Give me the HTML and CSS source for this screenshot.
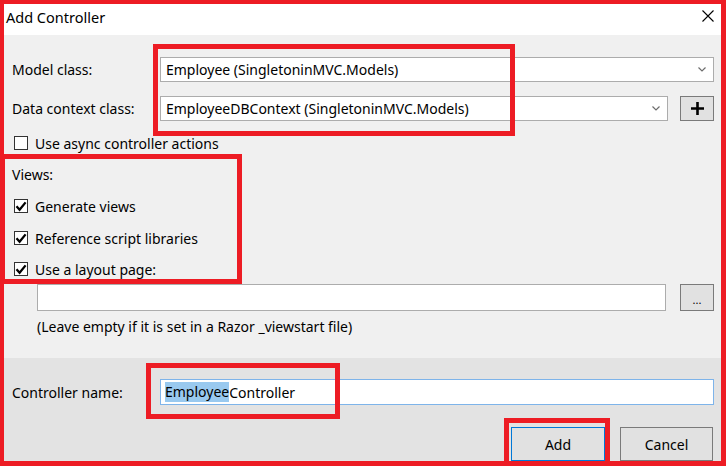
FILE: index.html
```html
<!DOCTYPE html>
<html>
<head>
<meta charset="utf-8">
<title>Add Controller</title>
<link rel="stylesheet" href="styles.css">
</head>
<body>
<div class="dialog">
  <div class="titlebar">
    <span class="title">Add Controller</span>
    <svg class="close" width="12" height="12" viewBox="0 0 12 12"><path d="M0.5 0.5 L11.5 11.5 M11.5 0.5 L0.5 11.5" stroke="#000" stroke-width="1.1" fill="none"/></svg>
  </div>
  <div class="main">
    <div class="row r-model">
      <span class="lbl">Model class:</span>
      <div class="combo">
        <span class="combo-text">Employee (SingletoninMVC.Models)</span>
        <svg class="chev" width="8" height="5" viewBox="0 0 8 5"><path d="M0.5 0.5 L4 4 L7.5 0.5" stroke="#6d6d6d" stroke-width="1.2" fill="none"/></svg>
      </div>
    </div>
    <div class="row r-context">
      <span class="lbl">Data context class:</span>
      <div class="combo">
        <span class="combo-text">EmployeeDBContext (SingletoninMVC.Models)</span>
        <svg class="chev" width="8" height="5" viewBox="0 0 8 5"><path d="M0.5 0.5 L4 4 L7.5 0.5" stroke="#6d6d6d" stroke-width="1.2" fill="none"/></svg>
      </div>
      <div class="btn btn-plus"><svg width="13" height="13" viewBox="0 0 13 13"><path d="M6.5 0 V13 M0 6.5 H13" stroke="#000" stroke-width="2.6" fill="none"/></svg></div>
    </div>
    <div class="check-row r-async">
      <span class="cb"></span>
      <span class="cb-text">Use async controller actions</span>
    </div>
    <div class="section-label">Views:</div>
    <div class="check-row r-gen">
      <span class="cb"><svg width="12" height="12" viewBox="0 0 12 12"><path d="M1.5 6.3 L4.6 9.8 L10.6 2.4" stroke="#000" stroke-width="2.3" fill="none"/></svg></span>
      <span class="cb-text">Generate views</span>
    </div>
    <div class="check-row r-ref">
      <span class="cb"><svg width="12" height="12" viewBox="0 0 12 12"><path d="M1.5 6.3 L4.6 9.8 L10.6 2.4" stroke="#000" stroke-width="2.3" fill="none"/></svg></span>
      <span class="cb-text">Reference script libraries</span>
    </div>
    <div class="check-row r-layout">
      <span class="cb"><svg width="12" height="12" viewBox="0 0 12 12"><path d="M1.5 6.3 L4.6 9.8 L10.6 2.4" stroke="#000" stroke-width="2.3" fill="none"/></svg></span>
      <span class="cb-text">Use a layout page:</span>
    </div>
    <div class="layout-row">
      <div class="textbox"></div>
      <div class="btn btn-browse">...</div>
    </div>
    <div class="hint">(Leave empty if it is set in a Razor _viewstart file)</div>
  </div>
  <div class="footer">
    <div class="row r-name">
      <span class="lbl">Controller name:</span>
      <div class="textbox focused"><span class="sel">Employee</span>Controller</div>
    </div>
    <div class="buttons">
      <div class="btn btn-dlg primary">Add</div>
      <div class="btn btn-dlg">Cancel</div>
    </div>
  </div>
</div>
<div class="mark mark-model"></div>
<div class="mark mark-views"></div>
<div class="mark mark-name"></div>
<div class="mark mark-add"></div>
</body>
</html>
```

FILE: styles.css
```css
* { box-sizing: border-box; }
html, body { margin: 0; padding: 0; }
body {
  position: relative;
  width: 726px;
  height: 466px;
  overflow: hidden;
  font-family: "Noto Sans", "Open Sans", sans-serif;
  font-size: 14px;
  color: #000;
  background: #fff;
}
.dialog {
  width: 726px;
  height: 466px;
  border: solid #ed1c24;
  border-width: 4px 5px 5px 4px;
  display: flex;
  flex-direction: column;
}
.titlebar {
  height: 31px;
  background: #fff;
  display: flex;
  justify-content: space-between;
  align-items: flex-start;
  padding: 0 7px 0 2px;
  flex: none;
}
.title {
  line-height: 26px;
  font-size: 14.5px;
}
.close { margin-top: 6px; }
.main {
  height: 323px;
  background: #f0f0f0;
  padding: 22px 7px 0 8px;
  flex: none;
}
.row {
  display: flex;
  align-items: center;
  height: 25px;
}
.r-context { margin-top: 14px; }
.lbl { width: 148px; flex: none; }
.combo {
  flex: 1;
  height: 25px;
  background: #fff;
  border: 1px solid #acacac;
  display: flex;
  align-items: center;
  justify-content: space-between;
  padding: 0 7px 0 5px;
}
.btn {
  background: #e1e1e1;
  border: 1px solid #7a7a7a;
  display: flex;
  align-items: center;
  justify-content: center;
  flex: none;
}
.btn-plus {
  width: 34px;
  height: 25px;
  margin-left: 12px;
}
.check-row {
  display: flex;
  align-items: center;
  height: 20px;
  padding-left: 2px;
}
.cb {
  width: 14px;
  height: 14px;
  border: 1px solid #333;
  background: #fff;
  display: flex;
  align-items: center;
  justify-content: center;
  flex: none;
}
.cb-text { margin-left: 7px; }
.r-async { margin-top: 12px; }
.section-label {
  height: 20px;
  line-height: 20px;
  margin-top: 12px;
}
.r-gen { margin-top: 11px; }
.r-ref { margin-top: 12px; }
.r-layout { margin-top: 11px; }
.layout-row {
  display: flex;
  margin-top: 5px;
  height: 27px;
  padding-left: 25px;
}
.textbox {
  flex: 1;
  background: #fff;
  border: 1px solid #acacac;
}
.btn-browse {
  width: 34px;
  height: 27px;
  margin-left: 14px;
  font-size: 11px;
  padding-top: 4px;
}
.hint {
  margin-top: 6px;
  height: 20px;
  line-height: 20px;
  padding-left: 25px;
}
.footer {
  flex: 1;
  background: #e3e3e3;
  padding: 21px 7px 0 8px;
}
.r-name { height: 26px; }
.textbox.focused {
  height: 26px;
  border-color: #7eb4ea;
  display: flex;
  align-items: center;
  padding-left: 4px;
}
.sel {
  background: #99c9ef;
  line-height: 20px;
}
.buttons {
  display: flex;
  justify-content: flex-end;
  gap: 15px;
  margin-top: 22px;
  margin-right: 1px;
}
.btn-dlg {
  height: 34px;
  width: 93px;
}
.btn-dlg.primary {
  width: 94px;
  border-color: #0078d7;
}
.mark {
  position: absolute;
  border: 5px solid #ed1c24;
  pointer-events: none;
}
.mark-model { left: 153px; top: 44px; width: 362px; height: 92px; }
.mark-views { left: 0; top: 154px; width: 242px; height: 130px; }
.mark-name { left: 146px; top: 363px; width: 194px; height: 56px; }
.mark-add { left: 504px; top: 418px; width: 106px; height: 48px; }
```
